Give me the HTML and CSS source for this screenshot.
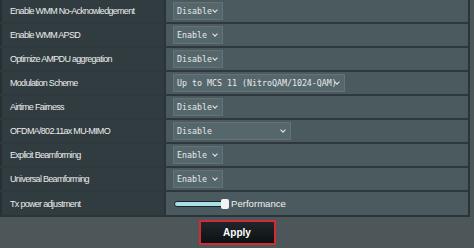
FILE: index.html
```html
<!DOCTYPE html>
<html>
<head>
<meta charset="utf-8">
<link rel="stylesheet" href="styles.css">
</head>
<body>
<div class="page">
  <div class="table">
    <div class="row"><div class="label">Enable WMM No-Acknowledgement</div><div class="value"><span class="sel w50">Disable<i class="chev"></i></span></div></div>
    <div class="row"><div class="label">Enable WMM APSD</div><div class="value"><span class="sel w50">Enable<i class="chev"></i></span></div></div>
    <div class="row"><div class="label">Optimize AMPDU aggregation</div><div class="value"><span class="sel w50">Disable<i class="chev"></i></span></div></div>
    <div class="row"><div class="label">Modulation Scheme</div><div class="value"><span class="sel wide">Up to MCS 11 (NitroQAM/1024-QAM)<i class="chev"></i></span></div></div>
    <div class="row"><div class="label">Airtime Fairness</div><div class="value"><span class="sel w50">Disable<i class="chev"></i></span></div></div>
    <div class="row"><div class="label">OFDMA/802.11ax MU-MIMO</div><div class="value"><span class="sel w118">Disable<i class="chev"></i></span></div></div>
    <div class="row"><div class="label">Explicit Beamforming</div><div class="value"><span class="sel w50">Enable<i class="chev"></i></span></div></div>
    <div class="row"><div class="label">Universal Beamforming</div><div class="value"><span class="sel w50">Enable<i class="chev"></i></span></div></div>
    <div class="row"><div class="label">Tx power adjustment</div><div class="value"><span class="slider"><span class="track"></span><span class="knob"></span></span><span class="perf">Performance</span></div></div>
  </div>
  <div class="footer"><button class="apply">Apply</button></div>
</div>
</body>
</html>
```
FILE: styles.css
```css
html, body { margin: 0; padding: 0; }
body { background: #4d5659; width: 474px; height: 248px; overflow: hidden; font-family: "Liberation Sans", Arial, sans-serif; }
.page { display: flex; flex-direction: column; }
.table { width: 470px; border-right: 2px solid #2b3438; border-bottom: 2px solid #2b3438; box-sizing: border-box; background: #4a5a5f; }
.row { display: flex; height: 24px; border-bottom: 2px solid #2f383c; box-sizing: border-box; }
.row:last-child { border-bottom: none; height: 23px; }
.label { width: 166px; flex: none; background: #313c40; border-right: 2px solid #2a3337; box-sizing: border-box; color: #ececec; font-size: 9px; letter-spacing: -0.7px; display: flex; align-items: center; padding-left: 8px; border-left: 2px solid #283034; }
.value { flex: 1; display: flex; align-items: center; padding-left: 7px; }
.sel { display: flex; align-items: center; height: 18px; box-sizing: border-box; background: #56676c; border: 1px solid #62747a; color: #e6eaeb; font-family: "DejaVu Sans Mono", monospace; font-size: 8.3px; padding-left: 3px; position: relative; }
.w50 { width: 50px; }
.w118 { width: 118px; }
.wide { width: 172px; }
.chev { width: 3px; height: 3px; border-right: 1.3px solid #e6eaeb; border-bottom: 1.3px solid #e6eaeb; transform: rotate(45deg); position: absolute; right: 5px; top: 5px; }
.slider { position: relative; width: 56px; height: 10px; margin-left: 1px; display: flex; align-items: center; }
.track { display: block; width: 52px; height: 4px; background: #a9e0e8; border: 1.5px solid #1c2326; border-radius: 3px; }
.knob { position: absolute; left: 47px; top: 0; width: 8px; height: 10px; background: #f2f2f2; border-radius: 2px; }
.perf { color: #f0f0f0; font-size: 9.6px; margin-left: 1px; }
.footer { display: flex; justify-content: center; padding-top: 3px; }
.apply { width: 77px; height: 25px; background: linear-gradient(#1f2629, #0d1113); border: 2px solid #d42a33; color: #fff; font-family: "Liberation Sans", Arial, sans-serif; font-weight: bold; font-size: 10px; padding: 0; box-sizing: border-box; }
```
